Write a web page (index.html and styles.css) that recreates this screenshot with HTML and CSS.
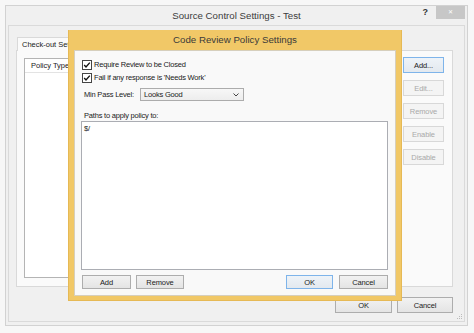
FILE: index.html
```html
<!DOCTYPE html>
<html lang="en">
<head>
    <meta charset="UTF-8">
    <title>Source Control Settings - Test</title>
    <link rel="stylesheet" href="styles.css">
</head>
<body>
<div class="screen">
    <div class="window">
        <div class="titlebar">
            <span></span>
            <span class="title">Source Control Settings - Test</span>
            <span class="controls">
                <span class="help">?</span>
                <span class="close">&#x2715;</span>
            </span>
        </div>
        <div class="client">
            <div class="tabs">
                <div class="tab">Check-out Settings</div>
            </div>
            <div class="panel">
                <div class="listbox">
                    <div class="list-head">
                        <span class="col">Policy Type</span>
                    </div>
                </div>
                <div class="side">
                    <button class="btn default">Add...</button>
                    <button class="btn" disabled>Edit...</button>
                    <button class="btn" disabled>Remove</button>
                    <button class="btn" disabled>Enable</button>
                    <button class="btn" disabled>Disable</button>
                </div>
            </div>
            <div class="footer">
                <button class="btn ok">OK</button>
                <button class="btn cancel">Cancel</button>
            </div>
            <svg class="grip" width="6" height="6" viewBox="0 0 6 6">
                <rect x="4" y="0" width="1" height="1" fill="#bbb"/>
                <rect x="2" y="2" width="1" height="1" fill="#bbb"/>
                <rect x="4" y="2" width="1" height="1" fill="#bbb"/>
                <rect x="0" y="4" width="1" height="1" fill="#bbb"/>
                <rect x="2" y="4" width="1" height="1" fill="#bbb"/>
                <rect x="4" y="4" width="1" height="1" fill="#bbb"/>
            </svg>
        </div>
    </div>

    <!-- dialog over the settings window -->
    <div class="dialog">
        <div class="dialog-title">Code Review Policy Settings</div>
        <div class="dialog-client">
            <label class="check-row">
                <svg class="check" width="10" height="10" viewBox="0 0 10 10">
                    <rect x="0.5" y="0.5" width="9" height="9" fill="#fff" stroke="#444"/>
                    <path d="M2.2 5 L4 7 L7.8 2.6" fill="none" stroke="#111" stroke-width="1.4"/>
                </svg>
                <span>Require Review to be Closed</span>
            </label>
            <label class="check-row second">
                <svg class="check" width="10" height="10" viewBox="0 0 10 10">
                    <rect x="0.5" y="0.5" width="9" height="9" fill="#fff" stroke="#444"/>
                    <path d="M2.2 5 L4 7 L7.8 2.6" fill="none" stroke="#111" stroke-width="1.4"/>
                </svg>
                <span>Fail if any response is 'Needs Work'</span>
            </label>
            <div class="level-row">
                <span class="level-label">Min Pass Level:</span>
                <div class="combo">
                    <span>Looks Good</span>
                    <svg width="6" height="4" viewBox="0 0 6 4">
                        <path d="M0.5 0.5 L3 3 L5.5 0.5" fill="none" stroke="#444" stroke-width="1"/>
                    </svg>
                </div>
            </div>
            <div class="paths-label">Paths to apply policy to:</div>
            <div class="paths">$/</div>
            <div class="dialog-buttons">
                <button class="btn add">Add</button>
                <button class="btn remove">Remove</button>
                <button class="btn default d-ok">OK</button>
                <button class="btn d-cancel">Cancel</button>
            </div>
        </div>
    </div>
</div>
</body>
</html>
```

FILE: styles.css
```css
body {
    margin: 0;
    background-color: #f7f7f7;
    font-family: "Liberation Sans", Arial, sans-serif;
    color: #222;
}

.screen {
    position: relative;
    width: 474px;
    height: 333px;
    overflow: hidden;
}

/* settings window */
.window {
    margin: 5px 0 0 5px;
    width: 463px;
    height: 321px;
    box-sizing: border-box;
    border: 1px solid #d2d2d2;
    background-color: #f0f0f0;
    display: flex;
    flex-direction: column;
}

.titlebar {
    height: 19px;
    display: grid;
    grid-template-columns: 1fr auto 1fr;
    align-items: start;
}

.title {
    font-size: 9.7px;
    line-height: 19px;
    color: #3c3c3c;
}

.controls {
    justify-self: end;
    display: flex;
    align-items: center;
    margin-right: 2px;
}

.help {
    font-size: 9px;
    font-weight: bold;
    color: #333;
    margin-right: 8px;
    line-height: 13px;
}

.close {
    width: 29px;
    height: 13px;
    background-color: #c7c7c7;
    color: #fff;
    font-size: 6px;
    line-height: 13px;
    text-align: center;
}

.client {
    position: relative;
    flex: 1;
    margin: 0 2px 3px 2px;
    border: 1px solid #dadada;
    padding: 11px 11px 8px 7px;
    display: flex;
    flex-direction: column;
}

.tabs {
    display: flex;
    padding-left: 1px;
    height: 13px;
}

.tab {
    position: relative;
    z-index: 1;
    height: 14px;
    box-sizing: border-box;
    border: 1px solid #d9d9d9;
    border-bottom: none;
    background-color: #fafafa;
    padding: 0 6px 0 4px;
    font-size: 7.5px;
    line-height: 13px;
}

.panel {
    height: 237px;
    box-sizing: border-box;
    border: 1px solid #d9d9d9;
    background-color: #fafafa;
    padding: 6px 8px 8px 7px;
    display: flex;
    gap: 7px;
}

.listbox {
    flex: 1;
    margin-top: 1px;
    border: 1px solid #b4b4b4;
    background-color: #fff;
}

.list-head {
    display: flex;
    height: 13px;
    border-bottom: 1px solid #e3e3e3;
}

.list-head .col {
    width: 90px;
    padding-left: 6px;
    border-right: 1px solid #e3e3e3;
    font-size: 7.5px;
    line-height: 13px;
}

.side {
    width: 41px;
    display: flex;
    flex-direction: column;
    gap: 7px;
}

.btn {
    height: 16px;
    box-sizing: border-box;
    border: 1px solid #adadad;
    background: linear-gradient(#f2f2f2, #e4e4e4);
    font-family: "Liberation Sans", Arial, sans-serif;
    font-size: 7.5px;
    letter-spacing: -0.1px;
    color: #222;
    padding: 0;
}

.btn.default {
    border-color: #7eb4ea;
    background: linear-gradient(#eef3f8, #e3e9ef);
}

.btn:disabled {
    border-color: #d8d8d8;
    background: #f4f4f4;
    color: #a9a9a9;
}

.footer {
    margin-top: 10px;
    display: flex;
    justify-content: flex-end;
    gap: 5px;
}

.footer .ok {
    width: 57px;
}

.footer .cancel {
    width: 56px;
}

.grip {
    position: absolute;
    right: 1px;
    bottom: 1px;
}

/* code review dialog */
.dialog {
    position: absolute;
    z-index: 2;
    left: 68px;
    top: 30px;
    width: 334px;
    height: 271px;
    box-sizing: border-box;
    background-color: #f1c867;
    border: 1px solid #e6b955;
    border-top: none;
    padding: 0 5px 4px 5px;
    display: flex;
    flex-direction: column;
}

.dialog-title {
    height: 20px;
    text-align: center;
    font-size: 9.7px;
    line-height: 20px;
    color: #3a3a3a;
}

.dialog-client {
    flex: 1;
    border: 1px solid #d6cfbd;
    background-color: #f9f9f9;
    padding: 8px 7px 6px 6px;
    display: flex;
    flex-direction: column;
    font-size: 7.5px;
    letter-spacing: -0.2px;
    color: #1a1a1a;
}

.check-row {
    height: 11px;
    margin-left: 1px;
    display: flex;
    align-items: center;
    gap: 2px;
}

.check-row.second {
    margin-top: 2px;
}

.level-row {
    margin-top: 5px;
    height: 13px;
    display: flex;
    align-items: center;
}

.level-label {
    width: 56px;
    margin-left: 3px;
}

.combo {
    width: 104px;
    height: 13px;
    box-sizing: border-box;
    border: 1px solid #acacac;
    background: linear-gradient(#f7f7f7, #ededed);
    padding: 0 4px 0 3px;
    display: flex;
    align-items: center;
    justify-content: space-between;
}

.paths-label {
    margin-top: 10px;
    margin-left: 3px;
    height: 9px;
    line-height: 9px;
}

.paths {
    margin-top: 1px;
    flex: 1;
    border: 1px solid #abadb3;
    background-color: #fff;
    padding: 2px 2px;
}

.dialog-buttons {
    margin-top: 5px;
    height: 14px;
    display: flex;
}

.dialog-buttons .btn {
    height: 14px;
}

.dialog-buttons .add {
    width: 49px;
    margin-left: 1px;
}

.dialog-buttons .remove {
    width: 48px;
    margin-left: 5px;
}

.dialog-buttons .d-ok {
    width: 47px;
    margin-left: auto;
}

.dialog-buttons .d-cancel {
    width: 49px;
    margin-left: 6px;
}
```
